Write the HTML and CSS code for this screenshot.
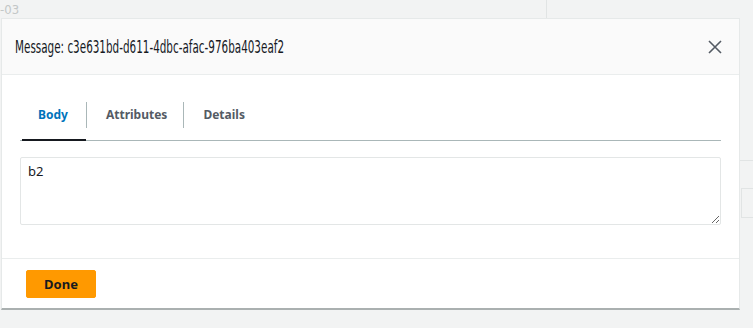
FILE: index.html
```html
<!DOCTYPE html>
<html>
<head>
<meta charset="utf-8">
<link rel="stylesheet" href="styles.css">
</head>
<body>
<div class="backdrop">
  <span class="bg-text">-03</span>
  <div class="bg-line"></div>
  <div class="bg-hline"></div>
  <div class="bg-box"></div>
</div>
<div class="modal">
  <div class="modal-header">
    <h2 class="modal-title">Message: c3e631bd-d611-4dbc-afac-976ba403eaf2</h2>
    <button class="close" aria-label="Close">
      <svg width="14" height="14" viewBox="0 0 14 14"><path d="M1 1 L13 13 M13 1 L1 13" stroke="#545b64" stroke-width="1.6" fill="none"/></svg>
    </button>
  </div>
  <div class="modal-body">
    <div class="tabs">
      <div class="tab active">Body</div>
      <div class="tab sep">Attributes</div>
      <div class="tab sep">Details</div>
    </div>
    <textarea class="content">b2</textarea>
  </div>
  <div class="modal-footer">
    <button class="done">Done</button>
  </div>
</div>
</body>
</html>
```
FILE: styles.css
```css
html, body {
  margin: 0;
  padding: 0;
  background: #f2f3f3;
  width: 753px;
  height: 328px;
  overflow: hidden;
  font-family: "Noto Sans", "Open Sans", sans-serif;
}
.backdrop {
  position: relative;
  width: 753px;
  height: 328px;
}
.bg-text {
  position: absolute;
  left: 0;
  top: 2px;
  font-family: "DejaVu Sans Condensed", sans-serif;
  font-size: 13px;
  color: #c3c7c7;
}
.bg-line {
  position: absolute;
  left: 546px;
  top: 0;
  width: 1px;
  height: 18px;
  background: #e1e4e4;
}
.bg-hline {
  position: absolute;
  left: 740px;
  top: 160px;
  width: 13px;
  height: 1px;
  background: #e1e4e4;
}
.bg-box {
  position: absolute;
  left: 741px;
  top: 188px;
  width: 20px;
  height: 28px;
  border: 1px solid #e1e4e4;
}
.modal {
  position: absolute;
  left: 1px;
  top: 18px;
  width: 737px;
  height: 289px;
  background: #fff;
  border: 1px solid #e6e9e9;
  border-bottom: 2px solid #aab0b0;
  display: flex;
  flex-direction: column;
}
.modal-header {
  height: 56px;
  background: #fafafa;
  border-bottom: 1px solid #eaeded;
  display: flex;
  align-items: center;
  justify-content: space-between;
  padding: 0 17px 0 13px;
  box-sizing: border-box;
  flex: none;
}
.modal-title {
  margin: 0;
  font-family: "DejaVu Sans Condensed", sans-serif;
  font-weight: normal;
  font-size: 17px;
  color: #16191f;
  transform: scaleX(0.68);
  transform-origin: left center;
  white-space: nowrap;
}
.close {
  background: none;
  border: none;
  padding: 0;
  width: 14px;
  height: 14px;
  display: flex;
  cursor: pointer;
}
.modal-body {
  padding: 20px 18px 0 18px;
  flex: 1;
  display: flex;
  flex-direction: column;
}
.tabs {
  display: flex;
  border-bottom: 1px solid #aab7b8;
  box-sizing: border-box;
  height: 46px;
}
.tab {
  position: relative;
  padding: 0 19px;
  font-size: 12px;
  font-weight: bold;
  color: #545b64;
  display: flex;
  align-items: center;
  padding-bottom: 6px;
}
.tab.active {
  color: #0073bb;
  margin-left: 2px;
  padding-left: 16px;
  padding-right: 18px;
  border-bottom: 2px solid #16191f;
  margin-bottom: -1px;
  padding-bottom: 5px;
}
.tab.sep {
  padding-left: 20px;
  padding-right: 16px;
}
.tab.sep::before {
  content: "";
  position: absolute;
  left: 0;
  top: 7px;
  width: 1px;
  height: 26px;
  background: #aab7b8;
}
.content {
  margin-top: 16px;
  height: 68px;
  box-sizing: border-box;
  width: 701px;
  border: 1px solid #e3e6e6;
  border-radius: 2px;
  padding: 4px 7px;
  font-family: "Noto Sans", sans-serif;
  font-size: 13px;
  color: #16191f;
  resize: vertical;
  outline: none;
}
.modal-footer {
  border-top: 1px solid #eaeded;
  padding: 11px 24px;
  height: 50px;
  box-sizing: border-box;
  flex: none;
}
.done {
  width: 70px;
  height: 28px;
  background: #ff9900;
  border: 1px solid #ff9900;
  border-radius: 2px;
  font-family: "Noto Sans", sans-serif;
  font-weight: bold;
  font-size: 13px;
  color: #16191f;
  padding: 0;
}
```
